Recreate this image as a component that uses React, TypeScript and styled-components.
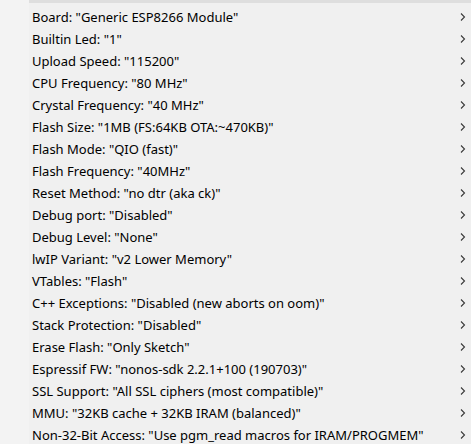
import React from "react";
import styled, { createGlobalStyle } from "styled-components";

const GlobalStyle = createGlobalStyle`
  html, body {
    margin: 0;
    padding: 0;
    background: #f0f0f0;
    overflow: hidden;
  }
`;

const Menu = styled.div`
  display: grid;
  grid-template-columns: 29px 1fr;
  width: 471px;
  height: 444px;
  overflow: hidden;
  background: #f0f0f0;
  font-family: "Noto Sans", "Open Sans", sans-serif;
  font-size: 13px;
  color: #000;
`;

const Gutter = styled.div`
  background: #f3f3f3;
`;

const List = styled.div`
  display: flex;
  flex-direction: column;
`;

const Separator = styled.div`
  height: 3px;
  background: #dedede;
  margin-bottom: 3px;
  flex-shrink: 0;
`;

const Row = styled.div`
  display: flex;
  align-items: center;
  justify-content: space-between;
  height: 22px;
  flex-shrink: 0;
  padding: 0 5px 0 3px;
  white-space: nowrap;
`;

const Label = styled.span`
  line-height: 22px;
`;

const Chevron = () => (
  <svg width="6" height="8" viewBox="0 0 6 8">
    <path d="M1 0.5 L4.5 4 L1 7.5" fill="none" stroke="#3a3a3a" strokeWidth="1.1" />
  </svg>
);

const items = [
  'Board: "Generic ESP8266 Module"',
  'Builtin Led: "1"',
  'Upload Speed: "115200"',
  'CPU Frequency: "80 MHz"',
  'Crystal Frequency: "40 MHz"',
  'Flash Size: "1MB (FS:64KB OTA:~470KB)"',
  'Flash Mode: "QIO (fast)"',
  'Flash Frequency: "40MHz"',
  'Reset Method: "no dtr (aka ck)"',
  'Debug port: "Disabled"',
  'Debug Level: "None"',
  'lwIP Variant: "v2 Lower Memory"',
  'VTables: "Flash"',
  'C++ Exceptions: "Disabled (new aborts on oom)"',
  'Stack Protection: "Disabled"',
  'Erase Flash: "Only Sketch"',
  'Espressif FW: "nonos-sdk 2.2.1+100 (190703)"',
  'SSL Support: "All SSL ciphers (most compatible)"',
  'MMU: "32KB cache + 32KB IRAM (balanced)"',
  'Non-32-Bit Access: "Use pgm_read macros for IRAM/PROGMEM"',
];

export default function App() {
  return (
    <>
      <GlobalStyle />
      <Menu>
        <Gutter />
        <List>
          <Separator />
          {items.map((text) => (
            <Row key={text}>
              <Label>{text}</Label>
              <Chevron />
            </Row>
          ))}
        </List>
      </Menu>
    </>
  );
}
